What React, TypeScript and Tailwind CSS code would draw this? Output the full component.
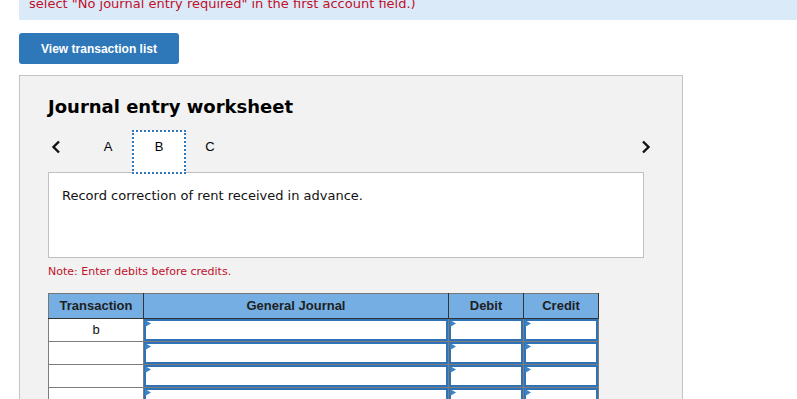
import React from 'react';

const verdana = { fontFamily: '"DejaVu Sans", Verdana, sans-serif' };
const arial = { fontFamily: '"Liberation Sans", Arial, sans-serif' };

function Chevron({ dir }: { dir: 'left' | 'right' }) {
  return (
    <svg width="10" height="14" viewBox="0 0 10 14" className="block shrink-0">
      <polyline
        points={dir === 'left' ? '8,1.5 2.5,7 8,12.5' : '2,1.5 7.5,7 2,12.5'}
        fill="none"
        stroke="#111"
        strokeWidth="2.4"
      />
    </svg>
  );
}

function InputCell() {
  return (
    <td className="border border-[#7d7d7d] p-0 h-[23px]">
      <div className="relative h-full border-2 border-[#2f73b6] bg-white">
        <svg width="6" height="7" viewBox="0 0 6 7" className="absolute -left-[1px] -top-[1px]">
          <polygon points="0,0 6,3.5 0,7" fill="#3c82c6" />
        </svg>
      </div>
    </td>
  );
}

export default function App() {
  const rows = ['b', '', '', ''];

  return (
    <div className="w-[797px] h-[399px] overflow-hidden bg-white">
      {/* instruction banner */}
      <div className="ml-[19px] h-[20px] overflow-hidden bg-[#dbeaf8] pl-[10px]">
        <p className="-mt-[4px] whitespace-nowrap text-[13px] leading-[16px] text-[#c0102a]" style={verdana}>
          select "No journal entry required" in the first account field.)
        </p>
      </div>

      <button
        className="ml-[19px] mt-[13px] flex h-[31px] w-[160px] items-center justify-center rounded-[3px] bg-[#2e77b8] text-[12px] font-bold text-white"
        style={arial}
      >
        View transaction list
      </button>

      <div className="ml-[19px] mt-[11px] h-[400px] w-[664px] border border-[#c4c4c4] bg-[#f2f2f2] pl-[28px] pt-[19px]">
        <h2 className="text-[18px] font-bold leading-[24px] text-black" style={verdana}>
          Journal entry worksheet
        </h2>

        {/* tabs */}
        <div className="relative z-10 mt-[11px] -mb-[2px] flex h-[44px] w-[603px] items-start" style={arial}>
          <div className="ml-[3px] mt-[10px]">
            <Chevron dir="left" />
          </div>
          <div className="ml-[42px] mt-[9px] w-[10px] text-center text-[13px] leading-[16px] text-black">A</div>
          <div className="ml-[19px] h-[44px] w-[54px] border-2 border-dotted border-[#2e77b8] bg-white pt-[7px] text-center text-[13px] leading-[16px] text-black">
            B
          </div>
          <div className="ml-[19px] mt-[9px] w-[10px] text-center text-[13px] leading-[16px] text-black">C</div>
          <div className="ml-auto mt-[10px]">
            <Chevron dir="right" />
          </div>
        </div>

        {/* description box */}
        <div className="h-[86px] w-[596px] border border-[#c0c0c0] bg-white pl-[13px] pt-[14px]">
          <p className="text-[13px] leading-[18px] text-[#111]" style={verdana}>
            Record correction of rent received in advance.
          </p>
        </div>

        <p className="mt-[6px] text-[11px] leading-[16px] text-[#c0102a]" style={verdana}>
          Note: Enter debits before credits.
        </p>

        {/* journal table */}
        <table className="mt-[13px] w-[550px] table-fixed border-collapse" style={arial}>
          <colgroup>
            <col className="w-[95px]" />
            <col className="w-[305px]" />
            <col className="w-[75px]" />
            <col className="w-[75px]" />
          </colgroup>
          <thead>
            <tr className="h-[25px] bg-[#74aee2] text-[13px] font-bold text-[#1f1f1f]">
              <th className="border border-[#333] border-t-[#777] border-l-[#777]">Transaction</th>
              <th className="border border-[#333] border-t-[#777]">General Journal</th>
              <th className="border border-[#333] border-t-[#777]">Debit</th>
              <th className="border border-[#333] border-t-[#777]">Credit</th>
            </tr>
          </thead>
          <tbody>
            {rows.map((t, i) => (
              <tr key={i} className="h-[23px]">
                <td className="border border-[#7d7d7d] bg-white text-center text-[13px] text-[#111]">{t}</td>
                <InputCell />
                <InputCell />
                <InputCell />
              </tr>
            ))}
          </tbody>
        </table>
      </div>
    </div>
  );
}
